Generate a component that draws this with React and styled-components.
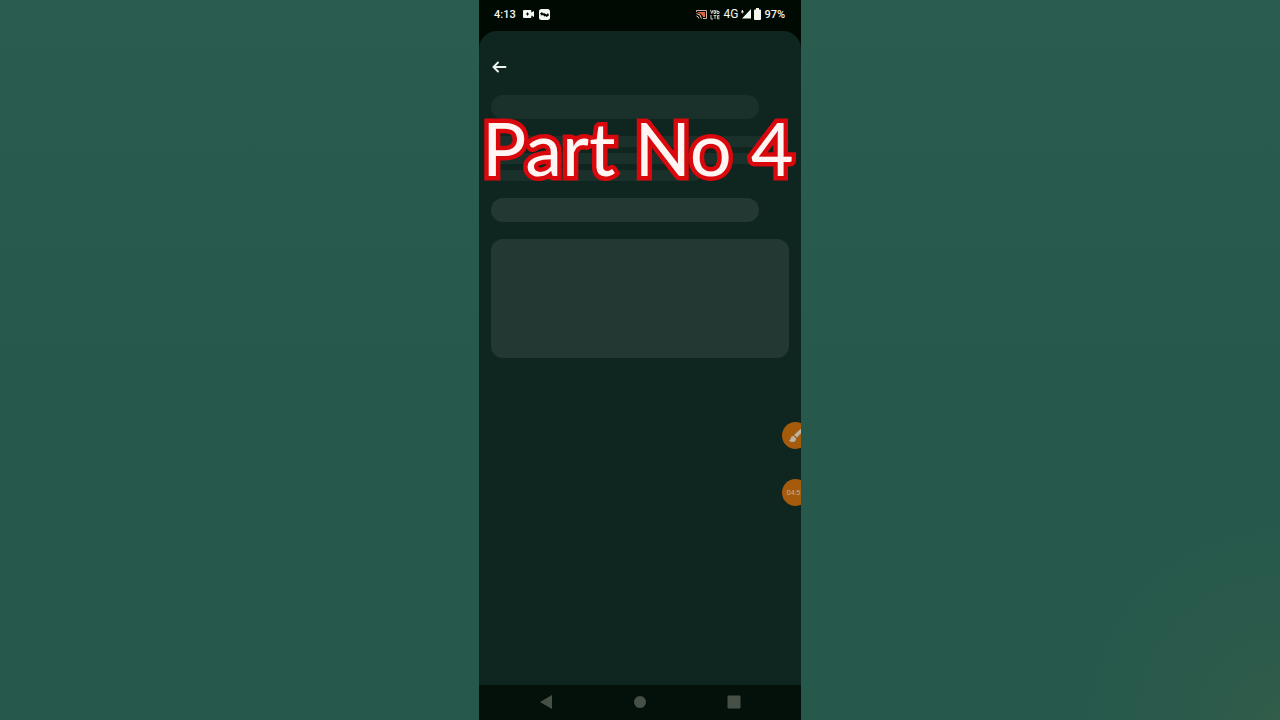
import React from "react";
import styled, { createGlobalStyle } from "styled-components";

const GlobalStyle = createGlobalStyle`
  * { box-sizing: border-box; }
  body {
    margin: 0;
    font-family: Roboto, "Liberation Sans", sans-serif;
    background: radial-gradient(circle at 100% 100%, #315d4a 0, #2b5a4b 90px, #26594c 200px) #26594c;
  }
`;

const Stage = styled.main`
  display: flex;
  justify-content: center;
  min-height: 100vh;
  background: linear-gradient(180deg, #2a5c4f 0, #26594c 55%, transparent 60%);
`;

const Phone = styled.section`
  position: relative;
  display: flex;
  flex-direction: column;
  width: 322px;
  max-width: 100%;
  overflow: hidden;
  background: #000a03;
`;

const StatusBar = styled.header`
  display: flex;
  align-items: center;
  justify-content: space-between;
  height: 31px;
  padding: 0 16px 3px 15px;
  color: #f4f7f2;
  font-size: 11px;
  font-weight: 500;
`;

const StatusGroup = styled.div`
  display: flex;
  align-items: center;
  gap: ${(p) => p.$gap}px;
`;

const Network = styled.span`
  font-size: 12px;
  font-weight: 400;
`;

const Clock = styled.span`
  margin-right: 2px;
`;

const Screen = styled.div`
  flex: 1;
  padding: 26px 12px;
  border-radius: 18px 18px 0 0;
  background: #0f2620;
`;

const IconButton = styled.button`
  display: block;
  padding: 0;
  border: 0;
  background: none;
  color: #eef5f1;
  line-height: 0;
`;

const Skeletons = styled.div`
  display: flex;
  flex-direction: column;
  gap: 17px;
  margin-top: 18px;
`;

const Lines = styled.div`
  display: flex;
  flex-direction: column;
  gap: 6px;
`;

const Bar = styled.div`
  width: ${(p) => p.$width || "100%"};
  height: ${(p) => p.$height}px;
  border-radius: 12px;
  background: ${(p) => (p.$dim ? "#1a302a" : "#243833")};
`;

const Title = styled.h1`
  position: absolute;
  top: 102px;
  left: 3px;
  margin: 0;
  color: #fff6f4;
  font: 400 74px/92px Lato, "Open Sans", sans-serif;
  white-space: nowrap;
  -webkit-text-stroke: 9px #d8080c;
  paint-order: stroke fill;
`;

const Floating = styled.div`
  position: absolute;
  top: 422px;
  right: -8px;
  display: flex;
  flex-direction: column;
  gap: 30px;
`;

const Bubble = styled.button`
  display: flex;
  align-items: center;
  justify-content: center;
  width: 27px;
  height: 27px;
  padding: 0;
  border: 0;
  border-radius: 50%;
  background: #a65a0c;
  color: #b9b3a4;
  font: 400 7px/8px Roboto, sans-serif;
`;

const NavBar = styled.nav`
  display: flex;
  align-items: center;
  justify-content: space-between;
  height: 35px;
  padding: 0 60px 2px;
  background: #04110a;
  button { color: #465047; }
`;

export default function App() {
  return (
    <>
      <GlobalStyle />
      <Stage>
        <Phone>
          <StatusBar>
            <StatusGroup $gap={5}>
              <Clock>4:13</Clock>
              <svg width="11" height="10" viewBox="0 0 11 10" aria-hidden="true">
                <path d="M1 1h6.500q.8 0 .8.8v1.700L11 2v6L8.300 6.500v1.700q0 .8-.8.8H1q-1 0-1-1V2q0-1 1-1z" fill="currentColor" />
                <path d="M3 5h3M4.500 3.500v3" stroke="#000a03" />
              </svg>
              <svg width="11" height="11" viewBox="0 0 11 11" aria-hidden="true">
                <rect width="11" height="11" rx="2.500" fill="currentColor" />
                <path d="M1 4.500L3 3l1 1.500 1-.5L7.500 5.500 9 4l1 2.500L7.500 8 6.500 7l-1 .5L4 6 2.500 6.500z" fill="#000a03" />
              </svg>
            </StatusGroup>
            <StatusGroup $gap={3}>
              <svg width="11" height="9" viewBox="0 0 11 9" aria-hidden="true">
                <path d="M.5 2V.5h10v8H7" fill="none" stroke="#c9b4aa" />
                <path d="M2 2h7v5H7Q6 3.500 2 3z" fill="#e0623e" />
                <path d="M.5 3.500q4.500.5 5 5M.5 6q2 .3 2.300 2.500" fill="none" stroke="#e8c8bb" />
              </svg>
              <svg width="10" height="11" viewBox="0 0 10 11" fill="none" stroke="#c8ccc6" strokeWidth="1" aria-hidden="true">
                <path d="M.5 1l1.300 3.500L3 1M4 1.500h1.500v3H4zM7 1v3.500M7 2.500h2v2H7M1 6v4h2M3.500 6.500h3M5 6.500V10M9.500 6.500h-2v3.300h2M7.500 8h2" />
              </svg>
              <Network>4G</Network>
              <svg width="10" height="10" viewBox="0 0 10 10" fill="currentColor" aria-hidden="true">
                <path d="M10 0v9.500H1zM1 1h1v1.500h1L1.500 5V3.500H0z" />
              </svg>
              <svg width="7" height="12" viewBox="0 0 7 12" fill="currentColor" aria-hidden="true">
                <path d="M2 0h3v1.500h1q1 0 1 1V11q0 1-1 1H1q-1 0-1-1V2.500q0-1 1-1h1z" />
              </svg>
              <span>97%</span>
            </StatusGroup>
          </StatusBar>
          <Screen>
            <IconButton aria-label="Back">
              <svg width="17" height="20" viewBox="0 0 17 20" fill="none" stroke="currentColor" strokeWidth="1.900" strokeLinecap="round" aria-hidden="true">
                <path d="M14.500 10H2.500M7 5.500L2.500 10 7 14.500" />
              </svg>
            </IconButton>
            <Skeletons>
              <Bar $width="90%" $height={24} $dim />
              <Lines>
                <Bar $height={11} $dim />
                <Bar $height={11} $dim />
                <Bar $width="70%" $height={11} $dim />
              </Lines>
              <Bar $width="90%" $height={24} />
              <Bar $height={119} />
            </Skeletons>
          </Screen>
          <NavBar>
            <IconButton aria-label="Back">
              <svg width="14" height="14" viewBox="0 0 14 14"><path d="M13 0v14L1 7z" fill="currentColor" /></svg>
            </IconButton>
            <IconButton aria-label="Home">
              <svg width="14" height="14" viewBox="0 0 14 14"><circle cx="7" cy="7" r="6" fill="currentColor" /></svg>
            </IconButton>
            <IconButton aria-label="Recent apps">
              <svg width="14" height="14" viewBox="0 0 14 14"><rect x=".5" y=".5" width="13" height="13" rx="1" fill="currentColor" /></svg>
            </IconButton>
          </NavBar>
          <Title>Part No 4</Title>
          <Floating>
            <Bubble aria-label="Draw">
              <svg width="15" height="15" viewBox="0 0 15 15" fill="currentColor" aria-hidden="true">
                <path d="M6 7L12.500 1Q15 1 15 3L9 9.500zM5.300 7.700L8.200 10.500Q8 14 4.500 14 2.500 14 1 12.500 2.500 12 2.700 10 3 8 5.300 7.700z" />
              </svg>
            </Bubble>
            <Bubble>04:51</Bubble>
          </Floating>
        </Phone>
      </Stage>
    </>
  );
}
